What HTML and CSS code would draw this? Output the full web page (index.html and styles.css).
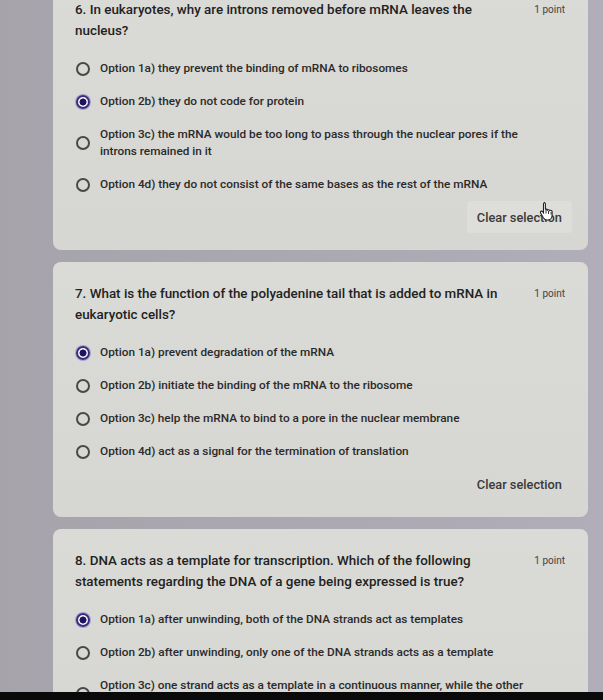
FILE: index.html
```html
<!DOCTYPE html>
<html>
<head>
<meta charset="utf-8">
<link rel="stylesheet" href="styles.css">
</head>
<body>
<main class="form">
  <section class="card card-first">
    <div class="q-head">
      <div class="q-title">6. In eukaryotes, why are introns removed before mRNA leaves the nucleus?</div>
      <div class="q-points">1 point</div>
    </div>
    <div class="options">
      <label class="opt"><span class="radio"></span><span class="opt-text">Option 1a) they prevent the binding of mRNA to ribosomes</span></label>
      <label class="opt"><span class="radio checked"></span><span class="opt-text">Option 2b) they do not code for protein</span></label>
      <label class="opt"><span class="radio"></span><span class="opt-text">Option 3c) the mRNA would be too long to pass through the nuclear pores if the introns remained in it</span></label>
      <label class="opt"><span class="radio"></span><span class="opt-text">Option 4d) they do not consist of the same bases as the rest of the mRNA</span></label>
    </div>
    <div class="q-foot">
      <span class="clear hover">Clear selection
        <svg class="cursor" width="16" height="20" viewBox="0 0 16 20"><path d="M5 1.5c.8 0 1.4.6 1.4 1.4v5.3l.6-.1c.7 0 1.2.4 1.3 1 .3-.3.7-.5 1.2-.4.6 0 1 .4 1.2.9.3-.3.7-.4 1.1-.3.8.1 1.3.7 1.3 1.5v3.6c0 2.5-1.8 4.6-4.4 4.6H8c-1.6 0-2.7-.7-3.5-2L1.6 12c-.4-.7-.2-1.4.4-1.700.6-.3 1.2-.1 1.6.4l.9 1.2V2.9c0-.8.6-1.4 1.4-1.4z" fill="#fff" stroke="#222" stroke-width="1.1"/><path d="M7 9v3.5M9.5 10v3M12 11v2.5" stroke="#222" stroke-width=".9"/></svg>
      </span>
    </div>
  </section>

  <section class="card">
    <div class="q-head">
      <div class="q-title">7. What is the function of the polyadenine tail that is added to mRNA in eukaryotic cells?</div>
      <div class="q-points">1 point</div>
    </div>
    <div class="options">
      <label class="opt"><span class="radio checked"></span><span class="opt-text">Option 1a) prevent degradation of the mRNA</span></label>
      <label class="opt"><span class="radio"></span><span class="opt-text">Option 2b) initiate the binding of the mRNA to the ribosome</span></label>
      <label class="opt"><span class="radio"></span><span class="opt-text">Option 3c) help the mRNA to bind to a pore in the nuclear membrane</span></label>
      <label class="opt"><span class="radio"></span><span class="opt-text">Option 4d) act as a signal for the termination of translation</span></label>
    </div>
    <div class="q-foot">
      <span class="clear">Clear selection</span>
    </div>
  </section>

  <section class="card">
    <div class="q-head">
      <div class="q-title">8. DNA acts as a template for transcription. Which of the following statements regarding the DNA of a gene being expressed is true?</div>
      <div class="q-points">1 point</div>
    </div>
    <div class="options">
      <label class="opt"><span class="radio checked"></span><span class="opt-text">Option 1a) after unwinding, both of the DNA strands act as templates</span></label>
      <label class="opt"><span class="radio"></span><span class="opt-text">Option 2b) after unwinding, only one of the DNA strands acts as a template</span></label>
      <label class="opt"><span class="radio"></span><span class="opt-text">Option 3c) one strand acts as a template in a continuous manner, while the other strand acts as a template in a discontinuous manner</span></label>
    </div>
  </section>
</main>
<div class="bezel"></div>
</body>
</html>
```

FILE: styles.css
```css
html, body {
  margin: 0;
  padding: 0;
  height: 700px;
  overflow: hidden;
}
body {
  background: linear-gradient(90deg, #a7a3ab 0%, #aba7b0 40%, #b1adb9 100%);
  font-family: Roboto, "Noto Sans", Arial, sans-serif;
  color: #2a2a2a;
}
.form {
  width: 535px;
  margin-left: 53px;
  margin-top: -22px;
  display: flex;
  flex-direction: column;
  gap: 12px;
}
.card {
  background: linear-gradient(180deg, #dadad6 0%, #d6d6d2 100%);
  border-radius: 8px;
  padding: 21px 22px 17px 22px;
}
.q-head {
  display: flex;
  align-items: flex-start;
  gap: 14px;
}
.q-title {
  flex: 1;
  font-size: 13.4px;
  font-weight: 500;
  line-height: 21px;
  color: #222;
}
.q-points {
  font-size: 10px;
  line-height: 21px;
  color: #444;
  padding-right: 1px;
}
.options {
  display: flex;
  flex-direction: column;
  margin-top: 11px;
}
.opt {
  display: flex;
  align-items: center;
  gap: 10px;
  padding: 8px 0;
  min-height: 17px;
}
.opt-text {
  font-size: 11.8px;
  font-weight: 500;
  line-height: 17px;
  color: #2a2a2a;
  max-width: 440px;
}
.radio {
  flex: none;
  box-sizing: border-box;
  width: 14px;
  height: 14px;
  border-radius: 50%;
  border: 2px solid #484848;
  margin-left: 1px;
}
.radio.checked {
  border-color: #3a2c82;
  background: radial-gradient(circle, #1e145a 0 3.2px, #f2f0f6 3.8px);
  box-shadow: 0 0 0 1px rgba(110, 90, 190, 0.45);
}
.q-foot {
  display: flex;
  justify-content: flex-end;
  height: 32px;
  margin-right: -6px;
}
.clear {
  position: relative;
  display: flex;
  align-items: center;
  padding: 0 10px;
  font-size: 12.8px;
  font-weight: 500;
  color: #3a3a3a;
  border-radius: 4px;
}
.clear.hover {
  background: #dddeda;
}
.cursor {
  position: absolute;
  left: 72px;
  top: 0;
}
.bezel {
  position: fixed;
  left: 0;
  right: 0;
  bottom: 0;
  height: 8px;
  background: #0a0a0a;
}
```
